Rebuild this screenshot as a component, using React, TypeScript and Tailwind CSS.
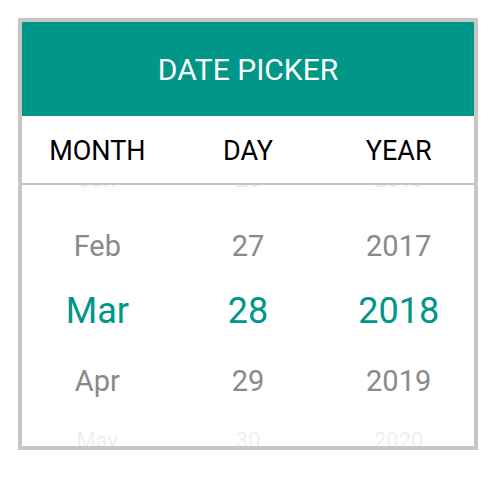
import React from 'react';

type Row = {
  month: string;
  day: string;
  year: string;
  height: string;
  tone: string;
};

// wheel rows, top to bottom; the outer ones are squashed and faded like a drum
const rows: Row[] = [
  { month: 'Jan', day: '26', year: '2016', height: 'h-[50px]', tone: 'text-[22px] text-[#ececec]' },
  { month: 'Feb', day: '27', year: '2017', height: 'h-[82px]', tone: 'text-[29px] text-[#8a8a8a]' },
  { month: 'Mar', day: '28', year: '2018', height: 'h-[48px]', tone: 'text-[36px] text-[#009688]' },
  { month: 'Apr', day: '29', year: '2019', height: 'h-[93px]', tone: 'text-[29px] text-[#8a8a8a]' },
  { month: 'May', day: '30', year: '2020', height: 'h-[26px]', tone: 'text-[22px] text-[#efefef]' },
];

const App: React.FC = () => {
  return (
    <div className="min-h-screen bg-white p-[18px] font-['Roboto',sans-serif]">
      <div className="w-[460px] border-4 border-[#c6c6c6] bg-white">
        <div className="flex h-[94px] items-center justify-center bg-[#009688] text-[30px] text-white">
          DATE PICKER
        </div>

        <div className="grid h-[67px] grid-cols-3 items-center pt-[4px] text-center text-[27px] text-black">
          <span>MONTH</span>
          <span>DAY</span>
          <span>YEAR</span>
        </div>

        <div className="h-[2px] bg-[#c4c4c4]" />

        <div className="h-[261px] overflow-hidden">
          <div className="-mt-[30px] flex flex-col">
            {rows.map((row) => (
              <div
                key={row.month}
                className={`grid grid-cols-3 items-center text-center leading-none ${row.height} ${row.tone}`}
              >
                <span>{row.month}</span>
                <span>{row.day}</span>
                <span>{row.year}</span>
              </div>
            ))}
          </div>
        </div>
      </div>
    </div>
  );
};

export default App;
